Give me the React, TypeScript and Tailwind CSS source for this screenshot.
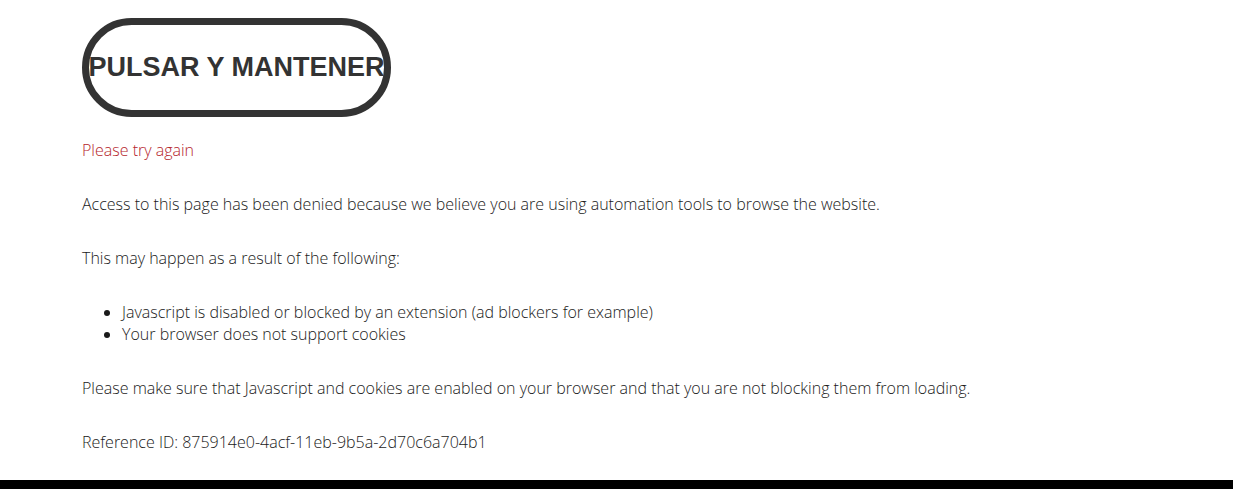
export default function App() {
  return (
    <div className="flex h-screen flex-col bg-white">
      <div className="flex-1 px-[82px] pt-[18px] font-['Open_Sans',sans-serif] text-[16px] font-light leading-[22px] text-[#1a1a1a]">
        <div className="flex h-[99px] w-[309px] items-center justify-center rounded-full border-[7px] border-[#333] bg-white">
          <span className="whitespace-nowrap font-['Liberation_Sans',Arial,sans-serif] text-[27px] font-bold leading-none text-[#333]">
            PULSAR Y MANTENER
          </span>
        </div>
        <p className="mt-[22px] text-[#b5252b]">Please try again</p>
        <p className="mt-[32px]">
          Access to this page has been denied because we believe you are using automation tools to browse the website.
        </p>
        <p className="mt-[32px]">This may happen as a result of the following:</p>
        <ul className="mt-[32px] list-disc pl-[40px]">
          <li>Javascript is disabled or blocked by an extension (ad blockers for example)</li>
          <li>Your browser does not support cookies</li>
        </ul>
        <p className="mt-[32px]">
          Please make sure that Javascript and cookies are enabled on your browser and that you are not blocking them from loading.
        </p>
        <p className="mt-[32px]">Reference ID: 875914e0-4acf-11eb-9b5a-2d70c6a704b1</p>
      </div>
      <div className="h-[9px] bg-black" />
    </div>
  );
}
